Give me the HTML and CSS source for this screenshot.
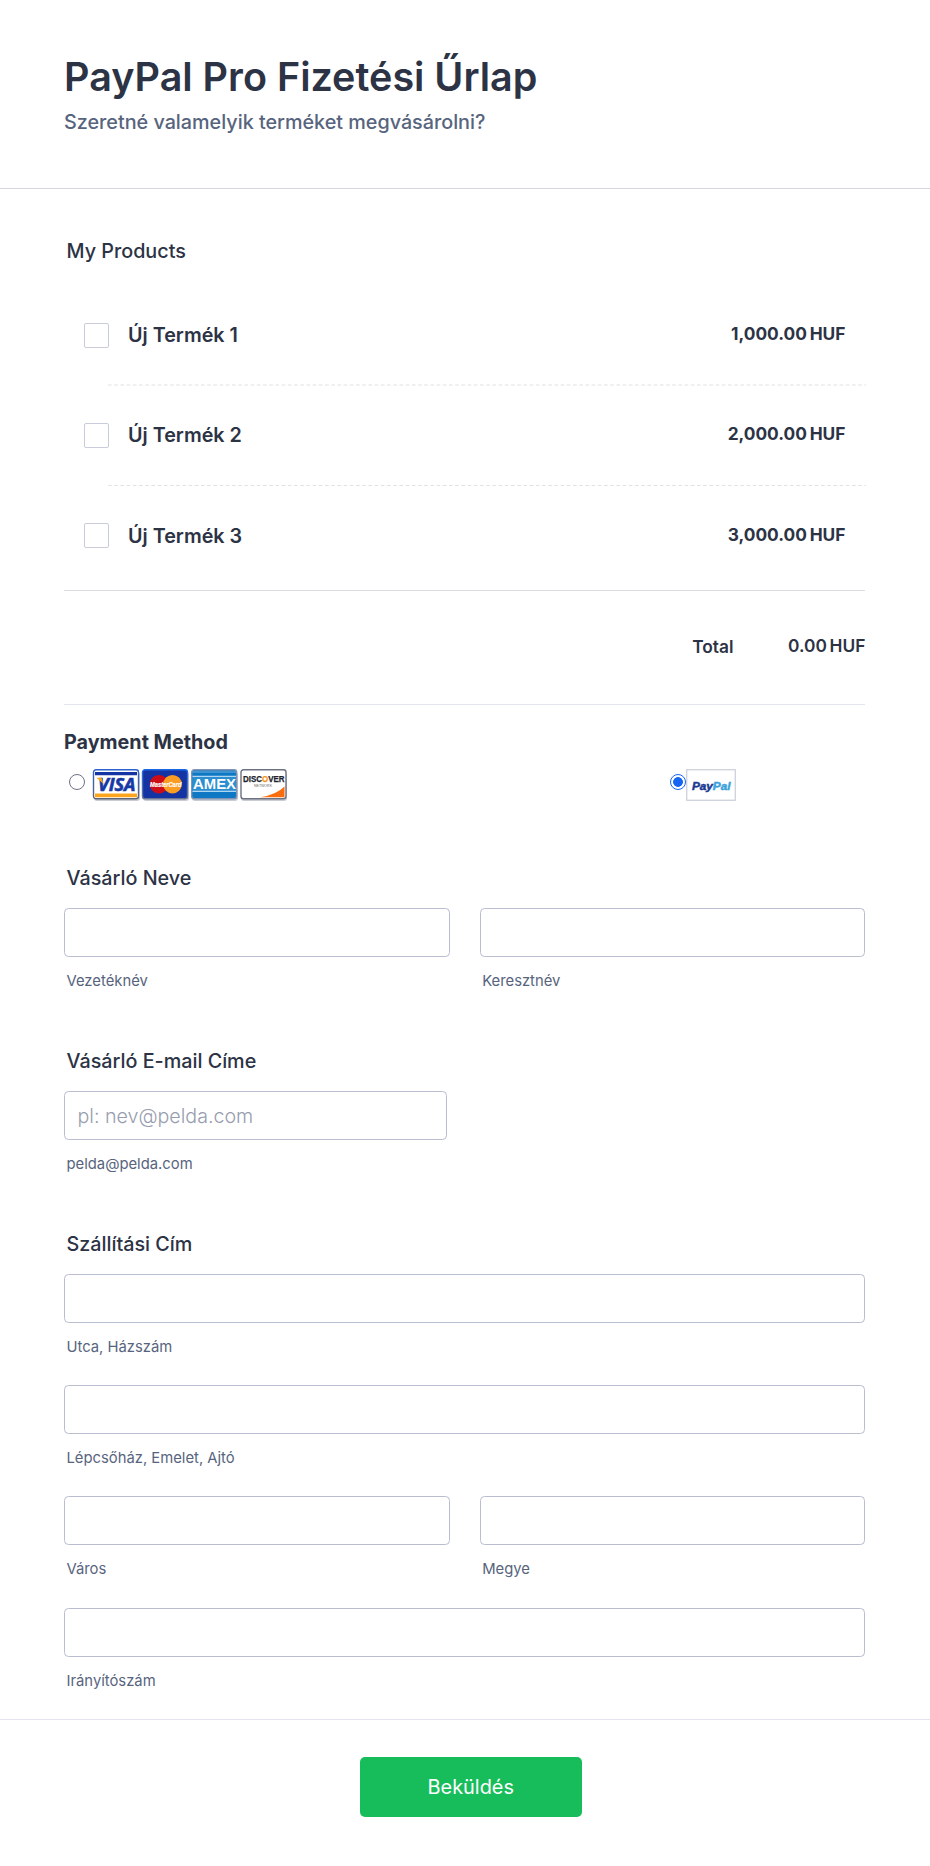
FILE: index.html
```html
<!DOCTYPE html>
<html lang="hu">
<head>
<meta charset="utf-8">
<title>PayPal Pro Fizetési Űrlap</title>
<link rel="stylesheet" href="styles.css">
</head>
<body>
<form class="form">
  <header class="form-header">
    <h1 class="title">PayPal Pro Fizetési Űrlap</h1>
    <div class="subtitle">Szeretné valamelyik terméket megvásárolni?</div>
  </header>
  <section class="content">
    <div class="label products-label">My Products</div>
    <div class="product"><span class="check"></span><span class="name">Új Termék 1</span><span class="price">1,000.00<i class="thin"></i>HUF</span></div>
    <svg class="dash" viewBox="0 0 758 2"><path d="M0 1H758"/></svg>
    <div class="product"><span class="check"></span><span class="name">Új Termék 2</span><span class="price">2,000.00<i class="thin"></i>HUF</span></div>
    <svg class="dash crisp" viewBox="0 0 758 2"><path d="M0 1.5H758"/></svg>
    <div class="product last"><span class="check"></span><span class="name">Új Termék 3</span><span class="price">3,000.00<i class="thin"></i>HUF</span></div>
    <div class="total"><span class="total-label">Total</span><span class="total-sum">0.00<i class="thin"></i>HUF</span></div>
    <div class="pay-title">Payment Method</div>
    <div class="pay-row">
      <span class="radio"></span>
      <svg class="cards" viewBox="0 0 198 34">
        <defs>
          <linearGradient id="edge" x1="0" y1="0" x2="0" y2="1"><stop offset="0" stop-color="#2b62cc"/><stop offset="1" stop-color="#5c6478"/></linearGradient>
          <linearGradient id="edge-mc" x1="0" y1="0" x2="0" y2="1"><stop offset="0" stop-color="#1a68e8"/><stop offset="1" stop-color="#6b7695"/></linearGradient>
        </defs>
        <g class="shadow"><rect x="2" y="3" width="46" height="29" rx="3"/><rect x="51" y="3" width="46" height="29" rx="3"/><rect x="100" y="3" width="46" height="29" rx="3"/><rect x="149" y="3" width="46" height="29" rx="3"/></g>
        <g>
          <rect x="1.500" y=".7" width="45" height="29" rx="2.500" fill="#fff" stroke="url(#edge)" stroke-width="1.400"/>
          <path d="M3 3H45V6.300H3Z" fill="#1434a4"/><path d="M3 24.500H45V28.300H3Z" fill="#fba51c"/>
          <text x="6" y="21.500" class="visa" textLength="37.500" lengthAdjust="spacingAndGlyphs">VISA</text>
          <path d="M4.500 8.800H9.500L11.500 15Z" fill="#fba51c"/>
        </g>
        <g>
          <rect x="50.500" y=".7" width="45" height="29" rx="2.500" fill="#1434a4" stroke="url(#edge-mc)" stroke-width="1.400"/>
          <circle cx="67" cy="15.200" r="9.300" fill="#cc0d18"/><circle cx="80.500" cy="15.200" r="9.300" fill="#fb9d22"/>
          <text x="58" y="18" class="master" textLength="31.500" lengthAdjust="spacingAndGlyphs">MasterCard</text>
        </g>
        <g>
          <rect x="99.700" y=".7" width="45" height="29" rx="2.500" fill="#0f78c4" stroke="#8095b5" stroke-width="1.400"/>
          <path d="M100.500 3H144" stroke="#6fb0dc" stroke-width="1"/>
          <path d="M100.500 7.500H144V22.500H100.500Z" fill="#2b8ed0"/>
          <path d="M100.500 7.300H144M100.500 22.300H144" stroke="#d8ecf8" stroke-width="1"/>
          <text x="101" y="19.700" class="amex" textLength="43" lengthAdjust="spacingAndGlyphs">AMEX</text>
        </g>
        <g>
          <rect x="149" y=".7" width="45" height="29" rx="2.500" fill="#fff" stroke="#6d7283" stroke-width="1.400"/>
          <path d="M168 28.300Q184 26 192.500 17.500V28.300Z" fill="#fb6c0c"/>
          <text x="151" y="13" class="discover" textLength="41.500" lengthAdjust="spacingAndGlyphs">DISC<tspan fill="#f7931e" stroke="#f7931e">O</tspan>VER</text>
          <text x="162" y="17.500" class="network" textLength="18" lengthAdjust="spacingAndGlyphs">NETWORK</text>
        </g>
      </svg>
      <span class="radio on"></span>
      <svg class="paypal" viewBox="0 0 50 32">
        <rect x=".75" y=".75" width="48.500" height="30.500" fill="#fff" stroke="#c8cdd9" stroke-width="1.200"/>
        <text x="6" y="20.500" textLength="38.500" lengthAdjust="spacingAndGlyphs"><tspan fill="#193a92" stroke="#193a92">Pay</tspan><tspan fill="#3ba2dc" stroke="#3ba2dc">Pal</tspan></text>
      </svg>
    </div>

    <div class="group">
      <div class="label">Vásárló Neve</div>
      <div class="row"><div class="field"><input class="input"><div class="sub">Vezetéknév</div></div><div class="field"><input class="input"><div class="sub">Keresztnév</div></div></div>
    </div>
    <div class="group">
      <div class="label">Vásárló E-mail Címe</div>
      <input class="input email" placeholder="pl: nev@pelda.com"><div class="sub">pelda@pelda.com</div>
    </div>
    <div class="group address">
      <div class="label">Szállítási Cím</div>
      <div class="stack">
        <div class="row"><div class="field"><input class="input"><div class="sub">Utca, Házszám</div></div></div>
        <div class="row"><div class="field"><input class="input"><div class="sub">Lépcsőház, Emelet, Ajtó</div></div></div>
        <div class="row"><div class="field"><input class="input"><div class="sub">Város</div></div><div class="field"><input class="input"><div class="sub">Megye</div></div></div>
        <div class="row"><div class="field"><input class="input"><div class="sub">Irányítószám</div></div></div>
      </div>
    </div>
  </section>
  <footer class="footer"><button type="button" class="submit">Beküldés</button></footer>
</form>
</body>
</html>
```
FILE: styles.css
```css
* { box-sizing: border-box; }
body { margin: 0; background: #fff; color: #2c3345; font-family: Inter, "Liberation Sans", sans-serif; font-size: 19.750px; }
.form { width: 930px; height: 1866px; overflow: hidden; }
.form-header { height: 189px; padding: 52px 64px 0; border-bottom: 1px solid #d4d6e2; }
.title { margin: 0; font-size: 39.500px; line-height: 50px; font-weight: 600; }
.subtitle { margin-top: 8px; line-height: 24px; font-weight: 500; color: #57647e; }
.content { padding: 0 64.600px 0 64px; height: 1530px; }
.label { line-height: 24px; padding-left: 2.500px; font-weight: 500; }
.products-label { padding-top: 50px; height: 95px; }
.product { display: flex; align-items: center; height: 99px; padding: 0 20px 1px 19.500px; margin-top: 1px; }
.products-label + .product { margin-top: 2px; }
.check { width: 25px; height: 25px; border: 1px solid #c8ccdb; border-radius: 2px; }
.name { margin-left: 19.500px; font-weight: 600; }
.price { margin-left: auto; font-size: 17.310px; font-weight: 700; padding-bottom: 3px; }
.thin { display: inline-block; width: 2.800px; }
.dash { display: block; width: 758px; height: 2px; margin: -1px 0 -1px 43.500px; }
.dash path { stroke: #f0f0f1; stroke-width: 2; stroke-dasharray: 3.700 2.500; fill: none; }
.dash.crisp path { stroke: #e2e2e4; stroke-width: 1; }
.product.last { height: 105px; padding-bottom: 5px; border-bottom: 1px solid #d9dae4; }
.total { display: flex; justify-content: flex-end; height: 114px; padding-top: 43px; border-bottom: 1px solid #e3e5ee; font-size: 17.310px; line-height: 24px; font-weight: 600; }
.total-label { padding-top: 1px; }
.total-sum { margin-left: 54.500px; }
.pay-title { margin-top: 25px; line-height: 24px; font-weight: 700; }
.pay-row { display: flex; align-items: flex-start; height: 38px; margin-top: 15px; padding-left: 5px; }
.radio { width: 16px; height: 16px; margin-top: 5px; border: 1px solid #6c7282; border-radius: 50%; }
.radio.on { margin-left: auto; border: 1.500px solid #1665f2; background: radial-gradient(circle, #1665f2 4.500px, #fff 5.200px); }
.cards { width: 198px; height: 34px; margin-left: 7px; }
.shadow { fill: #8b90a0; opacity: .45; }
.visa { font: italic 700 17px "Open Sans", sans-serif; fill: #1738a4; stroke: #1738a4; stroke-width: .6px; }
.master { font: italic 700 7.500px "Liberation Sans", sans-serif; fill: #fff; stroke: #fff; stroke-width: .2px; }
.amex { font: 700 14px "Liberation Sans", sans-serif; fill: #fff; }
.discover { font: 700 9.500px "Liberation Sans", sans-serif; fill: #20232b; stroke: #20232b; stroke-width: .25px; }
.discover tspan { stroke-width: .25px; }
.network { font: 3.500px "Liberation Sans", sans-serif; fill: #666; }
.paypal { width: 50px; height: 32px; margin-right: 129.400px; }
.paypal text { font: italic 700 11.500px "Liberation Sans", sans-serif; stroke-width: .5px; }
.group { height: 183px; padding-top: 45px; }
.pay-row + .group { margin-top: 13px; }
.label + .row, .label + .email, .stack { margin-top: 16px; }
.group .label { height: 27px; line-height: 27px; }
.input { display: block; width: 100%; height: 49px; border: 1px solid #b8bdcf; border-radius: 4.500px; background: #fff; padding: 0 12.500px; font: 300 19.650px Inter, sans-serif; color: #2c3345; }
.email { width: 383px; }
.input::placeholder { color: #979dae; opacity: 1; }
.sub { margin-top: 14px; padding-left: 2.500px; height: 20px; line-height: 20px; font-size: 14.800px; color: #57647e; }
.row { display: flex; gap: 30px; }
.field { flex: 1; }
.stack { display: grid; grid-auto-rows: 111.200px; }
.address { height: auto; }
.footer { display: flex; justify-content: flex-start; height: 147px; border-top: 1px solid #e3e4ef; padding: 37px 0 0 359.500px; }
.submit { width: 222.500px; height: 59.500px; border: 0; border-radius: 5px; background: #18bd5b; color: #fff; font: 400 19.900px Inter, sans-serif; }
```
